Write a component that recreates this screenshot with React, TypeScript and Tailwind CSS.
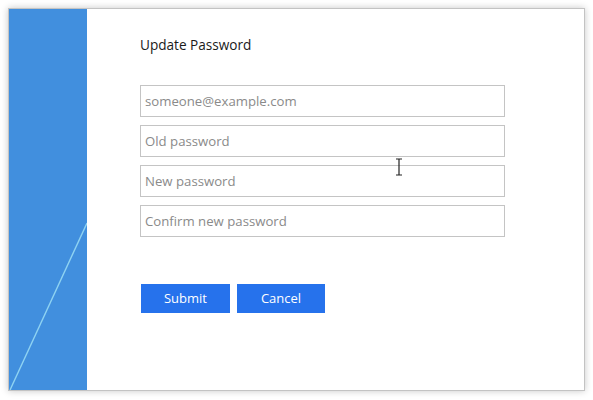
import React from 'react'

const font = { fontFamily: '"Open Sans", "Noto Sans", "DejaVu Sans", sans-serif' }

export default function App() {
  const inputClass =
    'block w-[365px] h-[32px] border border-[#c4c4c4] bg-white px-[4px] text-[13.2px] text-[#333] placeholder:text-[#8a8a8a] outline-none'

  return (
    <div className="w-[593px] h-[400px] bg-white p-[8px]" style={font}>
      <div className="relative flex h-[383px] w-[577px] border border-[#c3c3c3] bg-white shadow-[0_0_7px_rgba(0,0,0,0.22)]">
        {/* side panel */}
        <div className="relative w-[78px] shrink-0 bg-[#418fde]">
          <svg className="absolute inset-0" width="78" height="381" viewBox="0 0 78 381">
            <line x1="78" y1="214" x2="1" y2="381" stroke="#8fd3f2" strokeWidth="1.4" />
          </svg>
        </div>

        {/* form */}
        <div className="flex flex-col pl-[53px] pt-[26px]">
          <h1 className="text-[13.6px] leading-[19px] text-[#1a1a1a]">Update Password</h1>
          <div className="mt-[31px] flex flex-col gap-[8px]">
            <input className={inputClass} placeholder="someone@example.com" style={font} />
            <input className={inputClass} type="password" placeholder="Old password" style={font} />
            <input className={inputClass} type="password" placeholder="New password" style={font} />
            <input className={inputClass} type="password" placeholder="Confirm new password" style={font} />
          </div>
          <div className="mt-[47px] flex gap-[7px] pl-[1px]">
            <button className="h-[29px] w-[89px] bg-[#2672ec] text-[13px] text-white" style={font}>
              Submit
            </button>
            <button className="h-[29px] w-[88px] bg-[#2672ec] text-[13px] text-white" style={font}>
              Cancel
            </button>
          </div>
        </div>

        {/* mouse cursor */}
        <svg className="absolute left-[386px] top-[149px]" width="8" height="18" viewBox="0 0 8 18">
          <path d="M1 1h6M4 1v16M1 17h6" stroke="#222" strokeWidth="1.2" fill="none" />
        </svg>
      </div>
    </div>
  )
}
